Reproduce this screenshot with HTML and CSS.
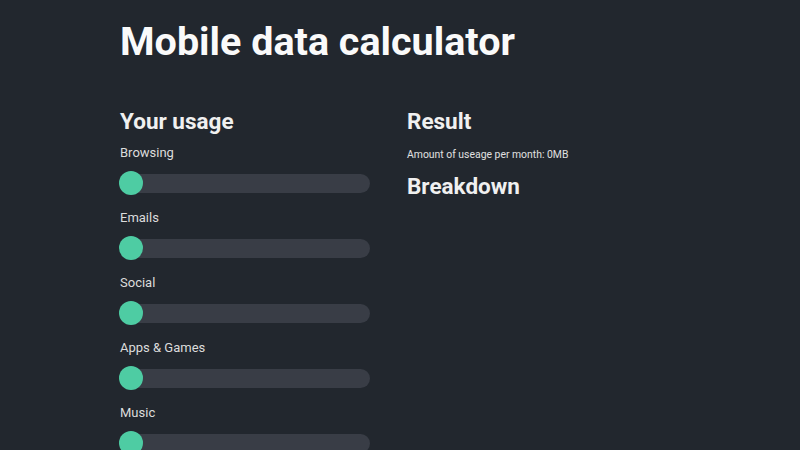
FILE: index.html
```html
<!DOCTYPE html>
<html lang="en">
<head>
<meta charset="utf-8">
<title>Mobile data calculator</title>
<link rel="stylesheet" href="styles.css">
</head>
<body>
<main class="page">
  <h1 class="title">Mobile data calculator</h1>
  <div class="columns">
    <section class="usage">
      <h2 class="heading">Your usage</h2>
      <div class="field">
        <label class="label">Browsing</label>
        <div class="slider"><span class="thumb"></span></div>
      </div>
      <div class="field">
        <label class="label">Emails</label>
        <div class="slider"><span class="thumb"></span></div>
      </div>
      <div class="field">
        <label class="label">Social</label>
        <div class="slider"><span class="thumb"></span></div>
      </div>
      <div class="field">
        <label class="label">Apps &amp; Games</label>
        <div class="slider"><span class="thumb"></span></div>
      </div>
      <div class="field">
        <label class="label">Music</label>
        <div class="slider"><span class="thumb"></span></div>
      </div>
    </section>
    <section class="result">
      <h2 class="heading">Result</h2>
      <p class="amount">Amount of useage per month: 0MB</p>
      <h2 class="heading breakdown">Breakdown</h2>
    </section>
  </div>
</main>
</body>
</html>
```

FILE: styles.css
```css
html, body {
  margin: 0;
  padding: 0;
  background: #22272e;
  color: #f2f2f2;
  font-family: Roboto, "Noto Sans", sans-serif;
  overflow: hidden;
}
.page {
  padding: 0 120px;
}
.title {
  margin: 0;
  padding-top: 17px;
  font-size: 39.5px;
  font-weight: 700;
  line-height: 50px;
  color: #fafafa;
}
.columns {
  display: flex;
  gap: 37px;
  margin-top: 40px;
}
.usage {
  width: 250px;
}
.heading {
  margin: 0;
  font-size: 22.5px;
  font-weight: 700;
  line-height: 28px;
  color: #f0f0f0;
}
.field {
  display: flex;
  flex-direction: column;
}
.label {
  margin-top: 10px;
  font-size: 13px;
  line-height: 16px;
  color: #dcdcdc;
}
.slider {
  position: relative;
  margin-top: 13px;
  height: 19px;
  border-radius: 10px;
  background: #393d46;
  margin-bottom: 5px;
}
.field + .field .label {
  margin-top: 12px;
}
.thumb {
  position: absolute;
  left: -1px;
  top: -3px;
  width: 24px;
  height: 24px;
  border-radius: 50%;
  background: #4ecca3;
}
.result {
  flex: 1;
}
.amount {
  margin: 13px 0 0;
  font-size: 10.4px;
  line-height: 14px;
  color: #e0e0e0;
}
.breakdown {
  margin-top: 10px;
}
```
